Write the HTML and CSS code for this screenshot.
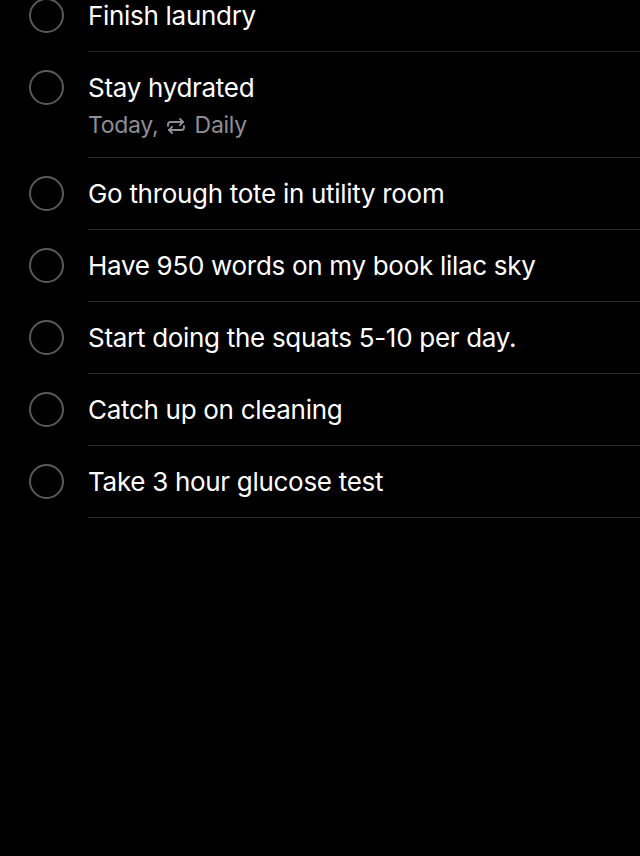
FILE: index.html
```html
<!DOCTYPE html>
<html lang="en">
<head>
  <meta charset="UTF-8" />
  <meta name="viewport" content="width=device-width, initial-scale=1.0"/>
  <title>Reminders</title>
  <link rel="stylesheet" href="styles.css">
</head>
<body>

<ul class="reminders">
  <li class="item">
    <span class="check"></span>
    <div class="body">
      <div class="title">Finish laundry</div>
    </div>
  </li>
  <li class="item">
    <span class="check"></span>
    <div class="body">
      <div class="title">Stay hydrated</div>
      <div class="meta">Today,
        <svg class="repeat" width="22" height="16" viewBox="0 0 22 16" fill="none" stroke="currentColor" stroke-width="1.8" stroke-linecap="round" stroke-linejoin="round">
          <path d="M3 8V6.5a2.5 2.5 0 0 1 2.5-2.5H18" />
          <path d="M15 1l3 3-3 3" />
          <path d="M19 8v1.5a2.5 2.5 0 0 1-2.5 2.5H4" />
          <path d="M7 9l-3 3 3 3" />
        </svg>
        Daily</div>
    </div>
  </li>
  <li class="item">
    <span class="check"></span>
    <div class="body">
      <div class="title">Go through tote in utility room</div>
    </div>
  </li>
  <li class="item">
    <span class="check"></span>
    <div class="body">
      <div class="title">Have 950 words on my book lilac sky</div>
    </div>
  </li>
  <li class="item">
    <span class="check"></span>
    <div class="body">
      <div class="title">Start doing the squats 5-10 per day.</div>
    </div>
  </li>
  <li class="item">
    <span class="check"></span>
    <div class="body">
      <div class="title">Catch up on cleaning</div>
    </div>
  </li>
  <li class="item">
    <span class="check"></span>
    <div class="body">
      <div class="title">Take 3 hour glucose test</div>
    </div>
  </li>
</ul>

</body>
</html>
```

FILE: styles.css
```css
* {
  box-sizing: border-box;
}

body {
  margin: 0;
  background: #000;
  color: #fff;
  font-family: Inter, "Liberation Sans", sans-serif;
  min-height: 100vh;
}

.reminders {
  list-style: none;
  margin: -20px 0 0;
  padding: 0;
}

.item {
  display: flex;
  align-items: flex-start;
  padding-left: 29px;
}

.check {
  flex-shrink: 0;
  width: 35px;
  height: 35px;
  margin: 18px 24px 0 0;
  border: 2px solid #5a5a5c;
  border-radius: 50%;
}

.body {
  flex: 1;
  padding: 18px 0;
  border-bottom: 1px solid #262628;
}

.title {
  font-size: 26px;
  line-height: 35px;
  letter-spacing: -0.3px;
}

.meta {
  margin-top: 6px;
  font-size: 23px;
  line-height: 28px;
  letter-spacing: -0.3px;
  color: #8e8e93;
}

.repeat {
  margin: 0 1px;
  vertical-align: -1px;
}
```
